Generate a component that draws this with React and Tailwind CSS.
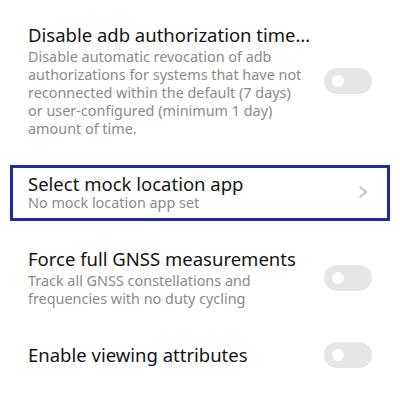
function Toggle() {
  return (
    <div className="w-[48px] h-[26px] rounded-full bg-[#e6e6e6] flex items-center pl-[8px] shrink-0">
      <div className="w-[12px] h-[12px] rounded-full bg-white" />
    </div>
  )
}

function Chevron() {
  return (
    <svg width="10" height="12" viewBox="0 0 10 12" className="shrink-0">
      <polyline points="2,1 8,6 2,11" fill="none" stroke="#a8a8a8" strokeWidth="1.3" strokeLinecap="round" strokeLinejoin="round" />
    </svg>
  )
}

function SwitchRow({ title, summary, truncate = false, className = '' }) {
  return (
    <div className={`flex items-center pl-[28px] pr-[28px] gap-[8px] ${className}`}>
      <div className="flex-1 min-w-0">
        <div className={`text-[18.5px] leading-[22px] text-[#141414] ${truncate ? 'truncate' : ''}`}>{title}</div>
        {summary && (
          <div className="mt-[2px] pr-[10px] text-[14.4px] leading-[18px] text-[#8a8a8a]">{summary}</div>
        )}
      </div>
      <Toggle />
    </div>
  )
}

export default function App() {
  return (
    <div
      className="w-[400px] h-[400px] bg-white pt-[24px] overflow-hidden"
      style={{ fontFamily: '"Noto Sans", sans-serif' }}
    >
      <SwitchRow
        truncate
        title="Disable adb authorization timeout"
        summary="Disable automatic revocation of adb authorizations for systems that have not reconnected within the default (7 days) or user-configured (minimum 1 day) amount of time."
      />

      <div className="mt-[27px] mx-[10px] border-[3px] border-[#1b2ba6] flex items-center pl-[15px] pr-[19px] pt-[5px] pb-[7px]">
        <div className="flex-1">
          <div className="text-[18.5px] leading-[22px] text-[#141414]">Select mock location app</div>
          <div className="text-[14.4px] leading-[16px] text-[#8a8a8a]">No mock location app set</div>
        </div>
        <Chevron />
      </div>

      <SwitchRow
        className="mt-[27px]"
        title="Force full GNSS measurements"
        summary="Track all GNSS constellations and frequencies with no duty cycling"
      />

      <SwitchRow className="mt-[34px]" title="Enable viewing attributes" />
    </div>
  )
}
